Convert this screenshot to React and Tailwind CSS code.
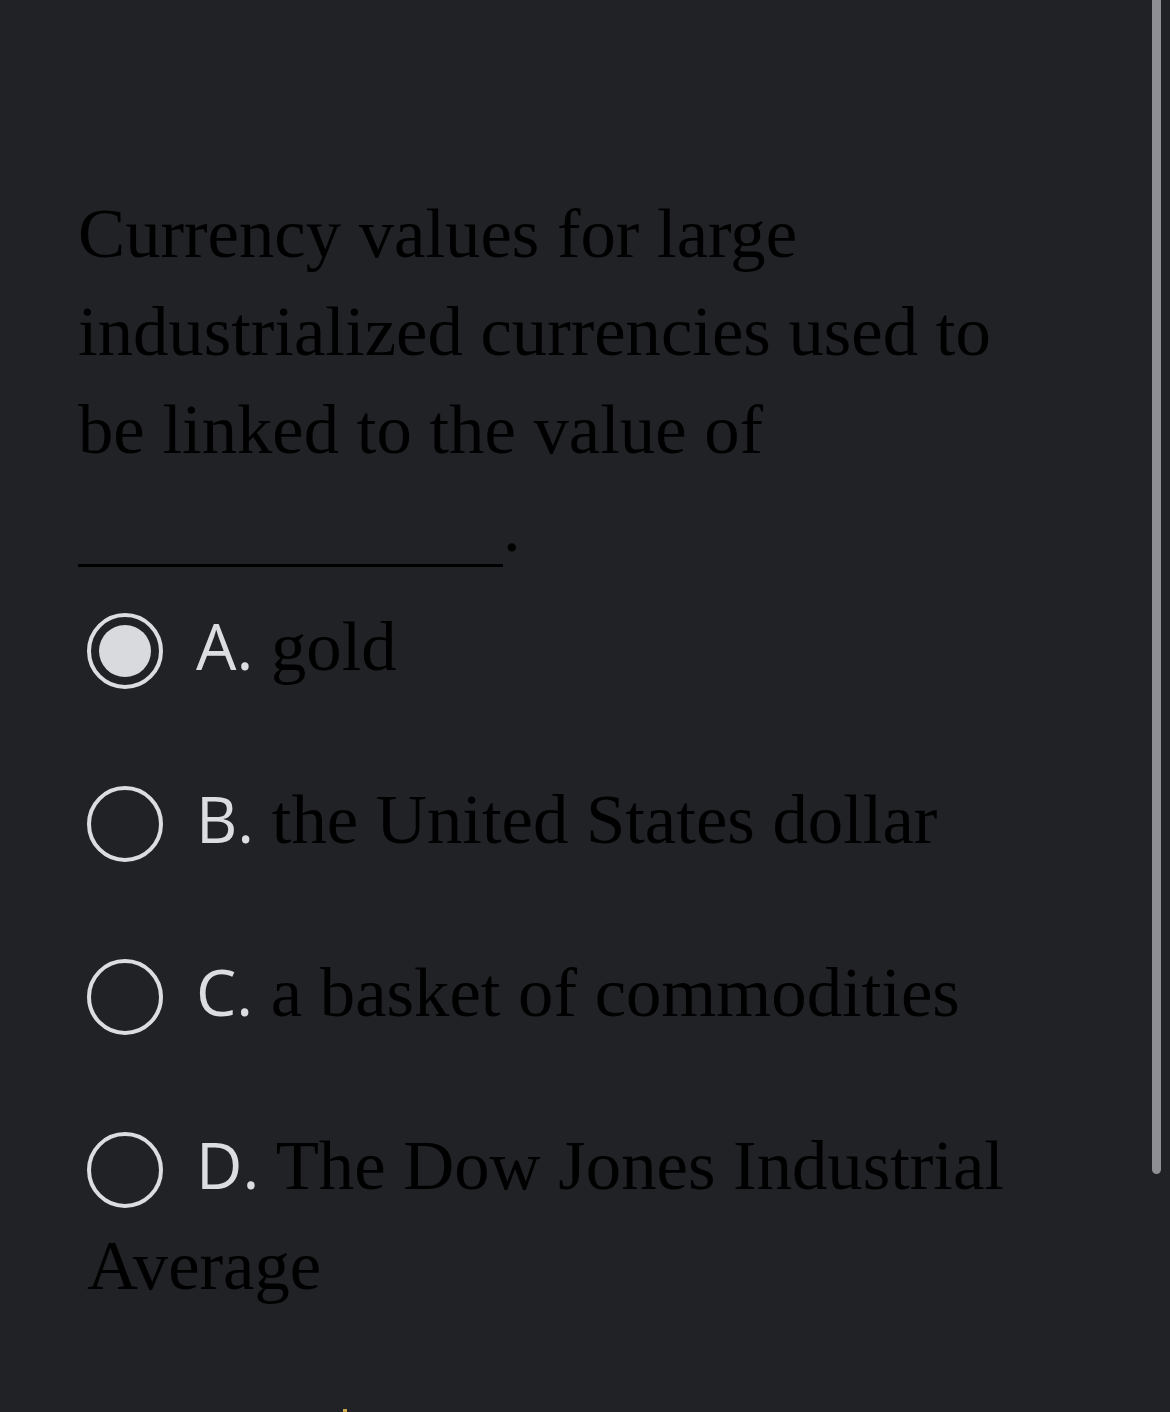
import React from 'react';

const options = [
  { letter: 'A.', text: 'gold', selected: true },
  { letter: 'B.', text: 'the United States dollar' },
  { letter: 'C.', text: 'a basket of commodities' },
  { letter: 'D.', text: 'The Dow Jones Industrial Average' },
];

const serif = "font-['Liberation_Serif','Times_New_Roman',serif]";

const Radio = ({ selected }) =>
  selected ? (
    <span className="inline-block w-[76px] h-[76px] rounded-full border-[4px] border-[#dcdde0] p-[8px] bg-[#d9dadd] bg-clip-content align-[-19px] mr-[33px]" />
  ) : (
    <span className="inline-block w-[76px] h-[76px] rounded-full border-[4px] border-[#dcdde0] align-[-19px] mr-[33px]" />
  );

const App = () => {
  return (
    <div className="relative w-[1170px] h-[1412px] overflow-hidden bg-[#212226]">
      {/* question */}
      <div className={`${serif} pt-[184px] pl-[78px] w-[1045px] text-[70.7px] leading-[98px] text-black`}>
        <p>
          Currency values for large industrialized currencies used to be linked to the value of{' '}
          <span className="inline-block w-[425px] h-0 border-b-[3px] border-black align-[-16px]" />.
        </p>
      </div>

      {/* answers */}
      <div className="pl-[87px] w-[1045px] flex flex-col gap-[73px] mt-[20px]">
        {options.map((opt) => (
          <p key={opt.letter} className={`${serif} text-[70.7px] leading-[100px] text-black`}>
            <Radio selected={opt.selected} />
            <span className="font-['Open_Sans','Noto_Sans',sans-serif] text-[64px] text-[#dcdde0]">{opt.letter}</span>{' '}
            {opt.text}
          </p>
        ))}
      </div>

      {/* scrollbar */}
      <div className="absolute top-0 left-[1152px] w-[9px] h-[1174px] rounded-b-full bg-[#8e8f93]" />
      <div className="absolute bottom-0 left-[343px] w-[4px] h-[3px] bg-[#c9a64a]" />
    </div>
  );
};

export default App;
